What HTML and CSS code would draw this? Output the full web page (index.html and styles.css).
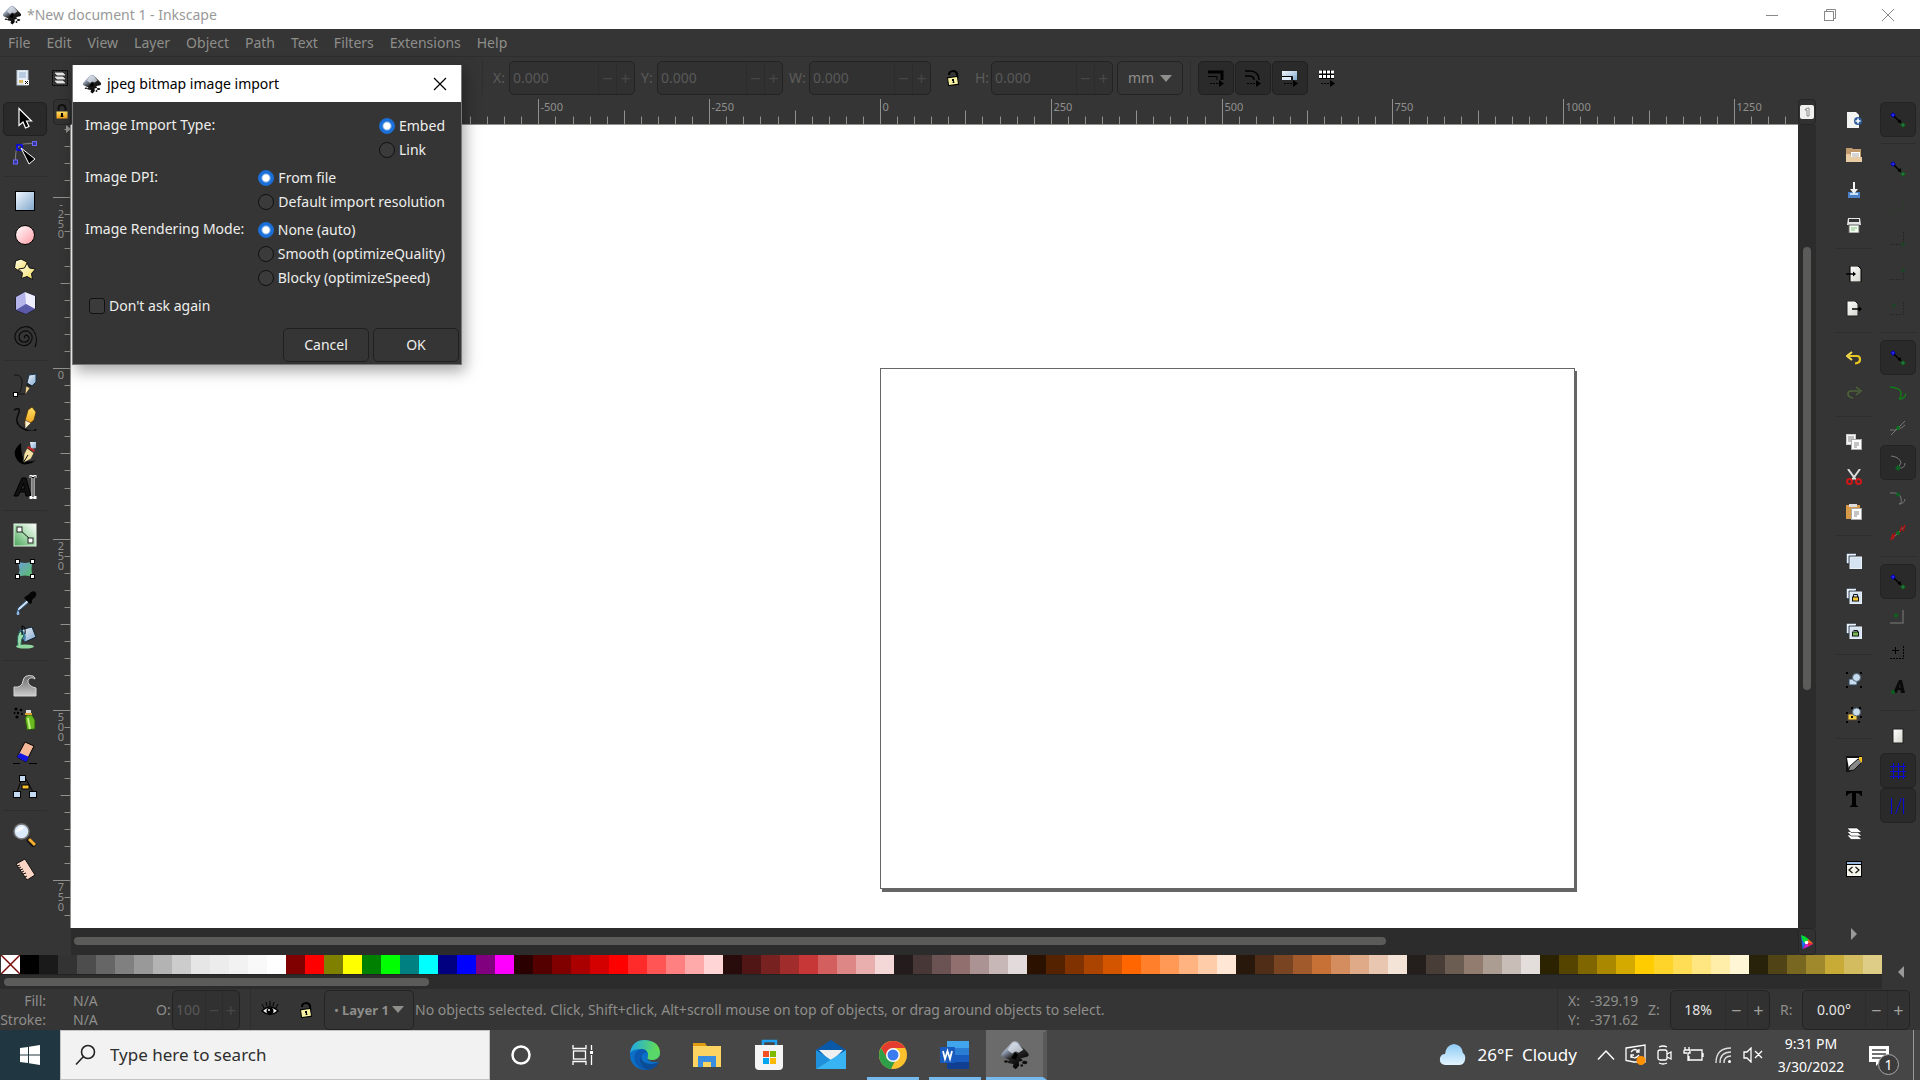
FILE: index.html
```
<!DOCTYPE html>
<html lang="en">
<head>
<meta charset="utf-8">
<title>*New document 1 - Inkscape</title>
<link rel="stylesheet" href="styles.css">
</head>
<body>
<svg class="sprite" aria-hidden="true">
  <defs>
    <linearGradient id="gLogo" x1="0" y1="0" x2="0.6" y2="1"><stop offset="0" stop-color="#fff"/><stop offset=".35" stop-color="#8d99ad"/><stop offset=".6" stop-color="#222"/><stop offset="1" stop-color="#000"/></linearGradient>
    <linearGradient id="gBlue" x1="0" y1="0" x2="1" y2="1"><stop offset="0" stop-color="#f4f9ff"/><stop offset="1" stop-color="#7fa6cc"/></linearGradient>
    <linearGradient id="gPink" x1="0" y1="0" x2="1" y2="1"><stop offset="0" stop-color="#fff"/><stop offset="1" stop-color="#ff9ca6"/></linearGradient>
    <linearGradient id="gYellow" x1="0" y1="0" x2="1" y2="1"><stop offset="0" stop-color="#fffef0"/><stop offset="1" stop-color="#f4dc5a"/></linearGradient>
    <linearGradient id="gGreen" x1="0" y1="1" x2="1" y2="0"><stop offset="0" stop-color="#48a35a"/><stop offset=".5" stop-color="#a8dcae"/><stop offset="1" stop-color="#fff"/></linearGradient>
    <linearGradient id="gMesh" x1="0" y1="0" x2="1" y2="1"><stop offset="0" stop-color="#6e9ce0"/><stop offset="1" stop-color="#58c060"/></linearGradient>
    <linearGradient id="gGrey" x1="0" y1="0" x2="0" y2="1"><stop offset="0" stop-color="#666"/><stop offset="1" stop-color="#ccc"/></linearGradient>
    <linearGradient id="gPaper" x1="0" y1="0" x2="1" y2="1"><stop offset="0" stop-color="#fff"/><stop offset="1" stop-color="#d4d4cc"/></linearGradient>
    <linearGradient id="gGold" x1="0" y1="0" x2="0" y2="1"><stop offset="0" stop-color="#ffe46a"/><stop offset="1" stop-color="#f09a10"/></linearGradient>
    <linearGradient id="gCloud" x1="0" y1="0" x2="0" y2="1"><stop offset="0" stop-color="#8ecbf6"/><stop offset="1" stop-color="#e4f5ff"/></linearGradient>
    <linearGradient id="gEdge" x1="0" y1="0" x2="1" y2="0"><stop offset="0" stop-color="#1fa8e8"/><stop offset="1" stop-color="#68e04a"/></linearGradient>
  </defs>
  <symbol id="logo" viewBox="0 0 20 20"><path d="M8 1.500Q10 0 12 1.500L18.500 8.500Q20 10.500 18 11.200L13.500 12.300Q16 13 14.500 14L12.500 14.500 12.800 17 10.500 19.500 8.500 18 9 16 6 15.500Q4 14.500 6.500 13.500L2 11.500Q0 10.500 1.500 8.500Z" fill="url(#gLogo)"/><path d="M8 2.500Q10 .8 12 2.500L15.500 6.500 12.500 8.500 10.500 7.500 8 9 5 6.500Z" fill="#dfe5ef" opacity=".75"/><path d="M10 8l2 2-1.500 3-3-1z" fill="#000"/><ellipse cx="16.500" cy="15" rx="1.800" ry="1.100" fill="#111"/><ellipse cx="4" cy="14.300" rx="1.300" ry=".8" fill="#111"/><circle cx="14.500" cy="17" r=".9" fill="#111"/></symbol>
  <symbol id="lock-open" viewBox="0 0 16 18"><path d="M4 6C4 1 11 1 12 5L12.500 9" fill="none" stroke="#000" stroke-width="2"/><rect x="3" y="8" width="10" height="8" fill="#f6f0a0" stroke="#000" transform="rotate(-8 8 12)"/><path d="M7 10h2v2l.5 2h-2l.5-2h-1z" fill="#000"/></symbol>
  <symbol id="snap-main" viewBox="0 0 16 16"><path d="M4 4L10 10" stroke="#000" stroke-width="1.500"/><path d="M11.500 11.500L7.500 10 10.500 7z" fill="#000"/><path d="M3 .2L5.800 3 3 5.800 .2 3z" fill="#00b"/><path d="M3 1.500L4.500 3 3 4.500 1.500 3z" fill="#33e"/><path d="M13 10.200L15.800 13 13 15.800 10.200 13z" fill="#0d6614"/><path d="M13 11.700L14.300 13 13 14.300 11.700 13z" fill="#36745e"/></symbol>
  <symbol id="two-sheets" viewBox="0 0 16 16"><path d="M1 1h9v2H3v8H1z" fill="#dce8f6" stroke="#1a2a3a"/><path d="M1.500 10V1.500H10" fill="none" stroke="#e8f0fa" stroke-width="1.500"/><rect x="4" y="4" width="11.500" height="11.500" fill="#d4e2f2" stroke="#e8f0fa"/></symbol>
</svg>

<header class="titlebar">
  <svg class="app-logo"><use href="#logo"/></svg>
  <h1 class="window-title">*New document 1 - Inkscape</h1>
  <div class="window-controls">
    <button aria-label="Minimize"><svg width="14" height="14"><path d="M1 7.500h12" stroke="#888"/></svg></button>
    <button aria-label="Restore"><svg width="14" height="14" fill="none" stroke="#888"><rect x="1.500" y="3.500" width="9" height="9"/><path d="M3.500 3V1.500h9v9H11"/></svg></button>
    <button aria-label="Close"><svg width="14" height="14"><path d="M1 1l12 12M13 1L1 13" stroke="#888"/></svg></button>
  </div>
</header>

<nav class="menubar">
  <button>File</button><button>Edit</button><button>View</button><button>Layer</button><button>Object</button><button>Path</button><button>Text</button><button>Filters</button><button>Extensions</button><button>Help</button>
</nav>

<section class="toolbar" aria-label="Tool controls">
  <button class="icon-btn" aria-label="New"><svg width="16" height="16" viewBox="0 0 16 16"><rect x="2" y="0" width="11" height="15" fill="#e8eef6" stroke="#b8c4d4"/><path d="M4 3h7M4 5h7M4 7h7" stroke="#88a8d0"/><rect x="4" y="10" width="4" height="3" fill="#d8b860"/><rect x="9" y="10" width="5" height="5" fill="#fff"/><path d="M10 11l3 3m0-3l-3 3" stroke="#000"/></svg></button>
  <button class="icon-btn" aria-label="Layers"><svg width="16" height="16" viewBox="0 0 16 16"><rect x=".5" y=".5" width="15" height="15" fill="none" stroke="#000" stroke-dasharray="2 1"/><path d="M3 3h8l2 2H5zM3 7h8l2 2H5zM3 11h8l2 2H5z" fill="#fff" stroke="#ccc"/></svg></button>
  <div class="fields">
    <label for="fx">X:</label><div class="spin spin-a"><input id="fx" value="0.000" disabled><button disabled>−</button><button disabled>+</button></div>
    <label for="fy">Y:</label><div class="spin spin-a"><input id="fy" value="0.000" disabled><button disabled>−</button><button disabled>+</button></div>
    <label class="wide" for="fw">W:</label><div class="spin spin-b"><input id="fw" value="0.000" disabled><button disabled>−</button><button disabled>+</button></div>
    <button class="ratio" aria-label="Lock ratio"><svg width="16" height="18"><use href="#lock-open"/></svg></button>
    <label for="fh">H:</label><div class="spin spin-b"><input id="fh" value="0.000" disabled><button disabled>−</button><button disabled>+</button></div>
    <button class="combo unit" aria-label="Unit">mm<i class="caret"></i></button>
    <div class="toggles">
      <button class="on" aria-label="Scale stroke"><svg width="18" height="18" viewBox="0 0 18 18"><path d="M1 3h14v8" fill="none" stroke="#000" stroke-width="3"/><path d="M1 7.500h9V11" fill="none" stroke="#000"/><path d="M3 14.500h9" stroke="#000" stroke-dasharray="2 1"/><path d="M12 11l5 3.500-5 3.500z"/></svg></button>
      <button class="on" aria-label="Scale corners"><svg width="18" height="18" viewBox="0 0 18 18"><path d="M1 2h6q8 1 8 9M1 7h4q5 0 5 4" fill="none" stroke="#000" stroke-width="1.500"/><path d="M3 14.500h9" stroke="#000" stroke-dasharray="2 1"/><path d="M12 11l5 3.500-5 3.500z"/></svg></button>
      <button class="on" aria-label="Move gradients"><svg width="18" height="18" viewBox="0 0 18 18"><path d="M1 2h15v9h-4V7H1z" fill="url(#gBlue)"/><path d="M1 8h9v3H1z" fill="#dceaf8"/><path d="M1 7.500h10V11" fill="none" stroke="#000"/><path d="M3 14.500h9" stroke="#000" stroke-dasharray="2 1"/><path d="M12 11l5 3.500-5 3.500z"/></svg></button>
      <button aria-label="Move patterns"><svg width="18" height="18" viewBox="0 0 18 18"><rect x="1" y="1" width="15" height="9" fill="#000"/><path d="M1 3h15M1 7.500h15" stroke="#fff" stroke-width="3" stroke-dasharray="3 1"/><path d="M3 14.500h9" stroke="#000" stroke-dasharray="2 1"/><path d="M12 11l5 3.500-5 3.500z"/></svg></button>
    </div>
  </div>
</section>

<main class="workspace">
  <aside class="toolbox" aria-label="Tools">
    <button class="on" aria-label="Select"><svg viewBox="0 0 24 24"><path d="M6 1.500v17l4-3.500 2.500 6 3.500-1.500L13.500 14h5z" fill="#000" stroke="#fff" stroke-width="1.200"/></svg></button>
    <button aria-label="Edit nodes"><svg viewBox="0 0 24 24"><path d="M2.500 20Q2 8 6 5T21 2.500" fill="none" stroke="#777" stroke-width="1.300"/><rect x=".5" y="19" width="4" height="4" fill="#35359a" stroke="#6a6aff"/><rect x="19.500" y=".5" width="4" height="4" fill="#35359a" stroke="#6a6aff"/><rect x="4" y="4" width="5" height="5" fill="none" stroke="#00f" stroke-width="1.500"/><path d="M8 7l14 11-6 5z" fill="#000" stroke="#fff"/></svg></button>
    <hr>
    <button aria-label="Rectangle"><svg viewBox="0 0 24 24"><rect x="2.500" y="2.500" width="19" height="19" fill="url(#gBlue)" stroke="#000"/></svg></button>
    <button aria-label="Ellipse"><svg viewBox="0 0 24 24"><circle cx="12" cy="12" r="9.500" fill="url(#gPink)" stroke="#000"/></svg></button>
    <button aria-label="Star"><svg viewBox="0 0 24 24"><path d="M8 2l6 3 .5 7-7 3-6-4 1-7z" fill="url(#gYellow)" stroke="#111"/><path d="M14 6l2.500 5 6 1-4 4.500 1 6-5.500-3-5.500 2 1-5.500-4-4 6-1z" fill="url(#gYellow)" stroke="#111"/></svg></button>
    <button aria-label="3D box"><svg viewBox="0 0 24 24"><path d="M3 6l9-5 10 4v13l-9 5-10-4z" fill="#9d9ddc" stroke="#112"/><path d="M3 6l9-5 1 12-10 6z" fill="#b4b4ea"/><path d="M12 1l10 4v13l-9-5z" fill="#eeeeff"/><path d="M13 13l9 5-9 5-10-4z" fill="#5a5aa8"/></svg></button>
    <button aria-label="Spiral"><svg viewBox="0 0 24 24"><path d="M12 13c-2-1 1-4 3-2 3 3-1 7-5 6-5-1-5-8-1-10 5-3 11 1 10 7-1 5-6 8-11 6C2 18 0 11 4 6 8 1 16 0 20 5c4 5 4 12 2 17" fill="none" stroke="#0a0a0a" stroke-width="1.200"/></svg></button>
    <hr>
    <button aria-label="Pen"><svg viewBox="0 0 24 24"><path d="M1 2q9-1 8 9t-6 10h9" fill="none" stroke="#151515"/><rect x=".5" y="19.500" width="4" height="4" fill="#fff" stroke="#000"/><path d="M16 2l7-1v8l-4 4-5-3z" fill="url(#gBlue)" stroke="#18344c"/><path d="M14 10l5 3-2 1-4-2z" fill="#222"/><path d="M13 13l4 2-5 7z" fill="#f4d890" stroke="#222" stroke-width=".6"/></svg></button>
    <button aria-label="Pencil"><svg viewBox="0 0 24 24"><path d="M1 3q8-4 4 5t6 14 12 0" fill="none" stroke="#0a0a0a" stroke-width="1.500"/><path d="M15 3l4-3 4 5-2 8-7 6-3-2z" fill="url(#gGold)" stroke="#503000" stroke-width=".8"/><path d="M12 13l6 3-6 6z" fill="#fff0cc" stroke="#222" stroke-width=".6"/></svg></button>
    <button aria-label="Calligraphy"><svg viewBox="0 0 24 24"><path d="M8 2Q-1 9 3 17t12 6q5-1 8-4-7 3-11 0T8 2z" fill="#000"/><path d="M17 1h6v6l-5 1z" fill="url(#gBlue)"/><path d="M15 5l7 4-1 2-7-4z" fill="#c02828"/><path d="M14 7l7 5-3 6-8 4 1-9z" fill="#f4e0a0" stroke="#222" stroke-width=".7"/><path d="M10 22l5-8" stroke="#000"/></svg></button>
    <button aria-label="Text"><svg viewBox="0 0 24 24"><path d="M1 21L9 3h4l5 18h-5l-1-4H7l-2 4zM8 14h3.500L10.500 8z" fill="#111" stroke="#000"/><path d="M16.500 1.500h2l1.500 1 1.500-1h2M16.500 22.500h2l1.500-1 1.500 1h2M20 2v20" fill="none" stroke="#fff" stroke-width="3"/><path d="M17 2h2l1 1 1-1h2M20 3v19" fill="none" stroke="#000"/></svg></button>
    <hr>
    <button aria-label="Gradient"><svg viewBox="0 0 24 24"><rect x="1" y="1" width="22" height="22" fill="url(#gGreen)" stroke="#e4f4e4"/><path d="M6 6l12 11" stroke="#111"/><rect x="4" y="4" width="5" height="5" fill="#fff" stroke="#222"/><rect x="15" y="15" width="5" height="5" fill="#fff" stroke="#222"/></svg></button>
    <button aria-label="Mesh"><svg viewBox="0 0 24 24"><path d="M4 4q8 4 16 0-3 8 0 16-8-3-16 0 5-7 0-16z" fill="url(#gMesh)"/><g fill="#fff" stroke="#000"><rect x="2.500" y="2.500" width="4" height="4"/><rect x="17.500" y="2.500" width="4" height="4"/><rect x="2.500" y="17.500" width="4" height="4"/><rect x="17.500" y="17.500" width="4" height="4"/></g></svg></button>
    <button aria-label="Dropper"><svg viewBox="0 0 24 24"><path d="M15 8l2 2L7 19l-3 1 1-3z" fill="#cfe4f8" stroke="#2a4a70"/><path d="M13 5l2-1 3-3q4-2 5 1t-2 5l-2 2v3l-2 1-6-6z" fill="#050505"/><path d="M5 19q3 5 0 5t0-5z" fill="#8ab8e8"/></svg></button>
    <button aria-label="Bucket"><svg viewBox="0 0 24 24"><path d="M7 5l12-3 4 10-11 5z" fill="url(#gBlue)" stroke="#123"/><path d="M12 17L6 7l2-3q7 5 4 13z" fill="#4c86b0"/><path d="M8 6q-5 3-3 15h3q0-8 3-10z" fill="#9adcb0" stroke="#265"/><ellipse cx="12" cy="21.500" rx="9" ry="2" fill="#8ed8a0"/><path d="M9 10V1q4 0 3 8" fill="none" stroke="#000"/></svg></button>
    <hr>
    <button aria-label="Tweak"><svg viewBox="0 0 24 24"><path d="M1 23v-9q8 1 9-6 1-7 10-5 2 1 2 3-4-3-7 1-1 6 8 8v8z" fill="url(#gGrey)" stroke="#d4d4d4"/></svg></button>
    <button aria-label="Spray"><svg viewBox="0 0 24 24"><path d="M12 11l2-3h5l3 5v9l-8 1z" fill="#68b820" stroke="#2a5010"/><path d="M15 11l2 11" stroke="#c0f080" stroke-width="2"/><rect x="13" y="3" width="5" height="3" fill="#ddd"/><rect x="12" y="6" width="7" height="2" fill="#e0a030"/><g fill="#000"><circle cx="3" cy="2" r="1.500"/><circle cx="8" cy="3" r="1.300"/><circle cx="5" cy="6" r="1.200"/><circle cx="9" cy="7" r="1"/><circle cx="4" cy="10" r="1.600"/><circle cx="1.500" cy="6" r="1"/></g></svg></button>
    <button aria-label="Eraser"><svg viewBox="0 0 24 24"><path d="M12 1l9 4-8 16-9-5z" fill="#f4b898" stroke="#000"/><path d="M7 12l9 4-3 5-9-5z" fill="#1414e0"/><path d="M0 22.500h7M16 22.500h8" stroke="#000"/></svg></button>
    <button aria-label="Connector"><svg viewBox="0 0 24 24"><path d="M4 17L8 6M13 4l7 13" stroke="#000"/><g fill="#c4daf0" stroke="#000"><rect x="6.500" y=".5" width="6" height="6"/><rect x=".5" y="16.500" width="7" height="6"/><rect x="16.500" y="16.500" width="7" height="6"/></g><rect x="9" y="10" width="7" height="4" fill="#f8c030" stroke="#000"/></svg></button>
    <hr>
    <button aria-label="Zoom"><svg viewBox="0 0 24 24"><path d="M15 16l7 7" stroke="#111" stroke-width="5"/><path d="M16 16l6 6" stroke="#f8b030" stroke-width="3"/><circle cx="8.500" cy="8.500" r="7.500" fill="#dcecfc" stroke="#777" stroke-width="1.500"/><path d="M3 9q2-6 8-5-2 4-8 5z" fill="#fff"/></svg></button>
    <button aria-label="Measure"><svg viewBox="0 0 24 24"><path d="M3 7l9-5 10 16-8 5z" fill="#fcd4c4" stroke="#111"/><path d="M4 9l3-1M6 11l2-1M7 13l3-1M9 15l2-1M10 17l3-1M12 20l2-1" stroke="#111"/></svg></button>
  </aside>

  <section class="canvas-grid">
    <button class="corner" aria-label="Lock guides"><svg width="14" height="16" viewBox="0 0 14 16"><path d="M3.500 7V4.500Q3.500 1 7 1t3.500 3.500V7" fill="none" stroke="#111" stroke-width="2"/><rect x="1" y="7" width="12" height="8" fill="url(#gGold)" stroke="#333"/><path d="M6 9h2v2l.5 2h-3l.5-2z"/></svg></button>
    <svg class="ruler-h" id="rulerH"></svg>
    <button class="corner" aria-label="Page view"><svg width="16" height="16" viewBox="0 0 16 16"><rect x="1" y="1" width="14" height="14" rx="2" fill="#f0f0ee"/><path d="M6 5.500l3-1.500h1v8H8V6H6z" fill="#fff" stroke="#888"/></svg></button>
    <svg class="ruler-v" id="rulerV"></svg>
    <div class="canvas"><div class="page"></div></div>
    <div class="scroll-v"><div class="thumb-v"></div></div>
    <div></div>
    <div class="scroll-h"><div class="thumb-h"></div></div>
    <button class="corner" aria-label="Color management"><svg width="16" height="18" viewBox="0 0 16 18"><path d="M2 2L3.500 16 8 9z" fill="#1c6cf0"/><path d="M2 2Q3 7 5 10L9 9 9.500 6Q6 3 2 2z" fill="#0d3"/><path d="M9 6q4 3 5 5l-6 0z" fill="#f07020"/><path d="M14 11q-5 3-10 5l3-6z" fill="#d020d0"/><path d="M14 11l-5 2-1-4z" fill="#f02040"/><circle cx="7.500" cy="9.500" r="1.800" fill="#fff"/></svg></button>
  </section>

  <aside class="dock commands" aria-label="Commands">
    <button aria-label="New document"><svg viewBox="0 0 16 16"><path d="M1 0h9l3 3v13H1z" fill="#f4f4f2"/><circle cx="12" cy="9" r="4" fill="#2c5c9c"/><path d="M12 6.500v5M9.500 9h5" stroke="#fff" stroke-width="1.500"/></svg></button>
    <button aria-label="Open"><svg viewBox="0 0 16 16"><path d="M0 1h6l1 1h8v13H0z" fill="#c09a6c"/><path d="M5 5h9v6H5z" fill="#fff"/><path d="M6 7h7M6 9h7" stroke="#aaa"/><path d="M0 7h4l1 3h11v5H0z" fill="#e8cca4"/></svg></button>
    <button aria-label="Save"><svg viewBox="0 0 16 16"><path d="M2 10h12v6H2z" fill="#4a80c8"/><path d="M4 11h8v2H4z" fill="#c8dcf4"/><path d="M7 0h2v7h3l-4 5-4-5h3z" fill="#f4f4f4"/></svg></button>
    <button aria-label="Print"><svg viewBox="0 0 16 16"><path d="M2 1h12l1 7H1z" fill="#e4e4e4"/><rect x="3" y="2" width="10" height="3" fill="#333"/><rect x="3" y="8" width="10" height="8" fill="#f4fff0" stroke="#666"/><path d="M5 11h6M5 13h4" stroke="#8b8"/></svg></button>
    <hr>
    <button aria-label="Import"><svg viewBox="0 0 16 16"><path d="M4 0h8l3 3v13H4z" fill="url(#gPaper)" stroke="#000"/><path d="M0 8h8" stroke="#000" stroke-width="1.500"/><path d="M7 5.500l3 2.500-3 2.500z"/></svg></button>
    <button aria-label="Export"><svg viewBox="0 0 16 16"><path d="M1 0h8l3 3v12H1z" fill="url(#gPaper)" stroke="#222"/><path d="M6 8h8" stroke="#000" stroke-width="1.500"/><path d="M13 5.500l3 2.500-3 2.500z"/></svg></button>
    <hr>
    <button aria-label="Undo"><svg viewBox="0 0 16 16"><path d="M3 6h8q3 0 3 3.500t-5 4" fill="none" stroke="#e8c820" stroke-width="2.200"/><path d="M6 2L1 6l5 4" fill="none" stroke="#f4dc50" stroke-width="2"/></svg></button>
    <button aria-label="Redo"><svg viewBox="0 0 16 16"><path d="M13 6H5Q2 6 2 9t5 4" fill="none" stroke="#4c6438" stroke-width="1.600"/><path d="M10 2l5 4-5 4" fill="none" stroke="#4c6438" stroke-width="1.600"/></svg></button>
    <hr>
    <button aria-label="Copy"><svg viewBox="0 0 16 16"><rect x=".5" y=".5" width="9" height="10" fill="#f4f4f4" stroke="#ccc"/><path d="M2 3h6M2 5h6M2 7h4" stroke="#888"/><rect x="5.500" y="5.500" width="10" height="10" fill="#fff" stroke="#aaa"/><path d="M8 9h5M8 11h5M8 13h3" stroke="#888"/></svg></button>
    <button aria-label="Cut"><svg viewBox="0 0 16 16"><path d="M2 0l8 11M14 0L6 11" stroke="#ddd" stroke-width="2"/><circle cx="3.500" cy="12.500" r="2.500" fill="none" stroke="#d01818" stroke-width="2"/><circle cx="12.500" cy="12.500" r="2.500" fill="none" stroke="#d01818" stroke-width="2"/></svg></button>
    <button aria-label="Paste"><svg viewBox="0 0 16 16"><rect x="0" y="1" width="14" height="14" fill="#d49a48"/><rect x="3" y="0" width="8" height="3" fill="#ddd"/><rect x="5.500" y="4.500" width="10" height="11" fill="#fff" stroke="#aaa"/><path d="M8 8h5M8 10h5M8 12h3" stroke="#888"/></svg></button>
    <hr>
    <button aria-label="Duplicate"><svg viewBox="0 0 16 16"><use href="#two-sheets"/></svg></button>
    <button aria-label="Clone"><svg viewBox="0 0 16 16"><use href="#two-sheets"/><path d="M7.500 9V6.500h4V9" fill="none" stroke="#111"/><rect x="6.500" y="9" width="6" height="4" fill="#f8c830" stroke="#111"/></svg></button>
    <button aria-label="Unlink clone"><svg viewBox="0 0 16 16"><use href="#two-sheets"/><path d="M7.500 7.500h4v2" fill="none" stroke="#111"/><rect x="6.500" y="9" width="6" height="4" fill="#78b850" stroke="#111"/></svg></button>
    <hr>
    <button aria-label="Group"><svg viewBox="0 0 16 16"><rect x="3" y="7" width="8" height="6" fill="#c8dcf0" stroke="#345"/><circle cx="10.500" cy="5.500" r="4" fill="#c8dcf0" stroke="#567"/><path d="M0 0h2v2H0zM14 0h2v2h-2zM0 14h2v2H0zM14 14h2v2h-2z"/></svg></button>
    <button aria-label="Ungroup"><svg viewBox="0 0 16 16"><rect x="2" y="7" width="9" height="6" fill="#f8d040" stroke="#543"/><circle cx="10.500" cy="5" r="4" fill="#c8dcf0" stroke="#567"/><path d="M0 5h2v2H0zM13 0h2v2h-2zM0 14h2v2H0zM12 14h2v2h-2zM5 0h2v2H5zM14 9h2v2h-2zM5 9h2v2H5z"/></svg></button>
    <hr>
    <button aria-label="Fill and stroke"><svg viewBox="0 0 16 16"><path d="M0 0h16v2L4 16H0z" fill="#111"/><path d="M1 2h12L3 13z" fill="#fff"/><path d="M12 3l4 3-8 8-6 1 2-5z" fill="#888" stroke="#111"/><path d="M13 1h3v6l-3-3z" fill="#f8c020"/></svg></button>
    <button aria-label="Text and font"><svg viewBox="0 0 16 16"><path d="M0 0h16v5h-1q-1-3-5-3v11q0 2 2 2v1H4v-1q2 0 2-2V2Q2 2 1 5H0z"/></svg></button>
    <button aria-label="Layers"><svg viewBox="0 0 16 16"><g fill="#fff" stroke="#111" stroke-width=".6"><path d="M1 9h10l5 4.500H5z"/><path d="M1 5.500h10l5 4.500H5z"/><path d="M1 2h10l5 4.500H5z"/></g></svg></button>
    <button aria-label="XML editor"><svg viewBox="0 0 16 16"><rect x=".5" y=".5" width="15" height="15" fill="#f4f4ea" stroke="#000"/><path d="M1 1h14v2H1z" fill="#98b8e0"/><path d="M1 3.500h14" stroke="#000"/><path d="M6.500 6L3 9l3.500 3M9.500 6L13 9l-3.500 3" fill="none" stroke="#111" stroke-width="1.200"/></svg></button>
    <button class="more" aria-label="More"><svg viewBox="0 0 16 16"><path d="M5 2l6 6-6 6z" fill="#999"/></svg></button>
  </aside>

  <aside class="dock snaps" aria-label="Snapping">
    <button class="on" aria-label="Snapping"><svg viewBox="0 0 16 16"><use href="#snap-main"/></svg></button>
    <hr>
    <button aria-label="Snap bounding boxes"><svg viewBox="0 0 16 16"><use href="#snap-main"/></svg></button>
    <button aria-label="Snap edges"><svg viewBox="0 0 16 16"><path d="M0 14.500h13.500V2" fill="none" stroke="#2b3d2a" stroke-dasharray="2 1"/></svg></button>
    <button aria-label="Snap corners"><svg viewBox="0 0 16 16"><path d="M0 13.500h13.500V1" fill="none" stroke="#242424" stroke-dasharray="2 1"/><path d="M13 11l2.500 2.500L13 16l-2.500-2.500z" fill="#1f4326"/></svg></button>
    <button aria-label="Snap edge midpoints"><svg viewBox="0 0 16 16"><path d="M0 13.500h13.500V5" fill="none" stroke="#282828" stroke-dasharray="2 1"/><path d="M13 2l2.500 2.500L13 7l-2.500-2.500z" fill="#1f4326"/></svg></button>
    <button aria-label="Snap centers"><svg viewBox="0 0 16 16"><path d="M0 13.500h13.500V1" fill="none" stroke="#282828" stroke-dasharray="2 1"/><path d="M4 2l2.500 2.500L4 7 1.500 4.500z" fill="#1f4326"/></svg></button>
    <hr>
    <button class="on" aria-label="Snap nodes"><svg viewBox="0 0 16 16"><use href="#snap-main"/></svg></button>
    <button aria-label="Snap paths"><svg viewBox="0 0 16 16"><path d="M0 2q11 1 11 6t-2 6q6 0 7-6" fill="none" stroke="#147a18" stroke-width="1.500"/></svg></button>
    <button aria-label="Snap intersections"><svg viewBox="0 0 16 16"><path d="M1 15L15 1M0 10q9 1 15-5" fill="none" stroke="#777"/><path d="M8 5.500l2.500 2.500L8 10.500 5.500 8z" fill="#0c7020"/></svg></button>
    <button class="on" aria-label="Snap cusp nodes"><svg viewBox="0 0 16 16"><path d="M1 1q9 1 10 7l-3 5q7 1 7-5" fill="none" stroke="#777"/><path d="M8 10l3 3-3 3-3-3z" fill="#0c6020"/></svg></button>
    <button aria-label="Snap smooth nodes"><svg viewBox="0 0 16 16"><path d="M0 3q10-1 11 5t-2 6q5 0 6-5" fill="none" stroke="#777"/><path d="M8 2l2.500 2.500L8 7 5.500 4.500z" fill="#0c6020"/></svg></button>
    <button aria-label="Snap line midpoints"><svg viewBox="0 0 16 16"><path d="M1 15L15 1" stroke="#777"/><path d="M1 15l2-6M3 14l2-6M10 7l2-6M13 6l2-6" stroke="#b01414" stroke-width="1.500"/><path d="M8 5.500l2.500 2.500L8 10.500 5.500 8z" fill="#0c7020"/></svg></button>
    <hr>
    <button class="on" aria-label="Snap others"><svg viewBox="0 0 16 16"><use href="#snap-main"/></svg></button>
    <button aria-label="Snap object midpoints"><svg viewBox="0 0 16 16"><path d="M0 14h13V1" fill="none" stroke="#666" stroke-width="1.500"/><path d="M6 4l2.500 2.500L6 9 3.500 6.500z" fill="#0c6020"/></svg></button>
    <button aria-label="Snap rotation centers"><svg viewBox="0 0 16 16"><path d="M0 14.500h13.500V2" fill="none" stroke="#000" stroke-dasharray="2 1"/><path d="M2 6.500h7M5.500 3v7" stroke="#000"/></svg></button>
    <button aria-label="Snap text baseline"><svg viewBox="0 0 16 16"><path d="M3 14L9 1h3l3 13h-4l-.5-3H8l-1.500 3zM9 8.500h1.500L10 5z" fill="#0a0a0a"/><path d="M3 10.500L5.500 13 3 15.500.5 13z" fill="#0c6020"/></svg></button>
    <hr>
    <button aria-label="Snap page border"><svg viewBox="0 0 16 16"><rect x="3" y="1" width="10" height="14" fill="url(#gPaper)" stroke="#222"/></svg></button>
    <button class="on" aria-label="Snap grids"><svg viewBox="0 0 16 16"><path d="M0 3.500h16M0 8.500h16M0 13.500h16M3.500 0v16M8.500 0v16M13.500 0v16" stroke="#0a0ad8"/></svg></button>
    <button class="on" aria-label="Snap guides"><svg viewBox="0 0 16 16"><path d="M1.500 0v16M13.500 0v16M5.500 16L11.500 0" fill="none" stroke="#0a0ad8"/></svg></button>
  </aside>
</main>

<section class="palette-bar">
  <div class="palette">
    <div class="swatches" id="swatches"></div>
    <div class="palette-scroll"><div class="thumb-p"></div></div>
  </div>
  <button class="palette-menu" aria-label="Palette menu"><svg width="16" height="16"><path d="M11 2L5 8l6 6z" fill="#999"/></svg></button>
</section>

<footer class="statusbar">
  <dl class="style-info"><dt>Fill:</dt><dd>N/A</dd><dt>Stroke:</dt><dd>N/A</dd></dl>
  <label for="op">O:</label>
  <div class="spin spin-o"><input id="op" value="100" disabled><button disabled>−</button><button disabled>+</button></div>
  <div class="layer-tools">
    <button aria-label="Layer visibility"><svg width="18" height="18" viewBox="0 0 18 18"><path d="M1 10q8-8 16 0-8 7-16 0z" fill="#eee" stroke="#000" stroke-width="1.500"/><circle cx="9" cy="10" r="3.500"/><circle cx="8" cy="9" r="1" fill="#fff"/><path d="M3 7L1 3M6 5L5 1M9 5V0M12 5l1-4M15 7l2-4" stroke="#000"/></svg></button>
    <button aria-label="Layer lock"><svg width="16" height="18"><use href="#lock-open"/></svg></button>
  </div>
  <button class="combo layer">•<b>Layer 1</b><i class="caret"></i></button>
  <p class="hint">No objects selected. Click, Shift+click, Alt+scroll mouse on top of objects, or drag around objects to select.</p>
  <dl class="coords"><dt>X:</dt><dd>-329.19</dd><dt>Y:</dt><dd>-371.62</dd></dl>
  <label for="zm">Z:</label>
  <div class="spin live spin-z"><input id="zm" value="18%"><button>−</button><button>+</button></div>
  <label for="rt">R:</label>
  <div class="spin live spin-r"><input id="rt" value="0.00°"><button>−</button><button>+</button></div>
</footer>

<footer class="taskbar">
  <button class="start" aria-label="Start"><svg width="20" height="20" viewBox="0 0 20 20"><path d="M0 3l8-1v7.500H0zM9 1.800L20 0v9.500H9zM0 10.500h8V18l-8-1zM9 10.500h11V20L9 18.200z" fill="#fff"/></svg></button>
  <label class="search"><svg width="22" height="22" viewBox="0 0 22 22" fill="none" stroke="#222" stroke-width="1.600"><circle cx="13" cy="8" r="6.500"/><path d="M8.500 12.500L1 20.500"/></svg><input placeholder="Type here to search" aria-label="Search"></label>
  <div class="apps">
    <button aria-label="Cortana"><svg width="22" height="22"><circle cx="11" cy="11" r="8.500" fill="none" stroke="#fff" stroke-width="2.500"/></svg></button>
    <button aria-label="Task view"><svg width="22" height="20" fill="none" stroke="#fff" stroke-width="1.300"><path d="M1 0v3.500h13V0M1 20v-3.500h13V20M19.500 0v5M19.500 10v10"/><rect x="1.500" y="6" width="12" height="8"/><path d="M18 7.500h3" stroke-width="3"/></svg></button>
    <button aria-label="Edge"><svg width="32" height="32" viewBox="0 0 32 32"><circle cx="16" cy="16" r="15" fill="#0c70c8"/><path d="M1 14Q3 1 16 1q14 1 15 12 0 8-8 8-6 0-4-4 1-7-7-7Q4 10 1 14z" fill="url(#gEdge)"/><path d="M12 10q-9 3-6 13 4 8 12 8-9-4-7-12 1-4 7-6-2-3-6-3z" fill="#0a58b0"/><path d="M18 31q8 0 12-8-9 4-15 0-4-3-2-8-6 10 5 16z" fill="#0b4c96"/><path d="M19 17q-2 6 7 6 4 0 5-2v4h3V12l-3 1q0 8-8 8-5 0-4-4z" fill="#464646"/><path d="M30.800 12q1 8-7 9-7 0-4.500-4 0-4-2-6z" fill="#58d868"/></svg></button>
    <button aria-label="File Explorer"><svg width="28" height="26" viewBox="0 0 28 26"><path d="M0 1h12l2 3H0z" fill="#e09c10"/><path d="M0 4h28v21H0z" fill="#fcd462"/><path d="M5 25V14h18v11h-5v-5h-8v5z" fill="#3a8ee0"/></svg></button>
    <button aria-label="Microsoft Store"><svg width="30" height="32" viewBox="0 0 30 32"><path d="M9 8V2h13v6" fill="none" stroke="#20a0f0" stroke-width="2.500"/><path d="M1 6h28v21q0 4-4 4H5q-4 0-4-4z" fill="#f4f4f4"/><path d="M9 12h6v6H9z" fill="#f25022"/><path d="M16 12h6v6h-6z" fill="#7fba00"/><path d="M9 19h6v6H9z" fill="#00a4ef"/><path d="M16 19h6v6h-6z" fill="#ffb900"/></svg></button>
    <button aria-label="Mail"><svg width="30" height="30" viewBox="0 0 30 30"><path d="M0 10L15 0l15 10v8H0z" fill="#0a58a8"/><path d="M3 10h24L15 22z" fill="#f0f0f0"/><path d="M0 10l15 10L0 29z" fill="#1e90dc"/><path d="M30 10L0 29h30z" fill="#38b4f4"/></svg></button>
    <button class="running" aria-label="Chrome"><svg width="30" height="30" viewBox="0 0 30 30"><circle cx="15" cy="15" r="14" fill="#fbc02d"/><path d="M3 8a14 14 0 0 1 24.200 0H15l-6 10z" fill="#e53c30"/><path d="M3 8l6.500 10.500L17 21l-4 8A14 14 0 0 1 3 8z" fill="#2f9e48"/><circle cx="15" cy="15" r="7" fill="#fff"/><circle cx="15" cy="15" r="5.500" fill="#3a7cf0"/></svg></button>
    <button class="running" aria-label="Word"><svg width="30" height="28" viewBox="0 0 30 28"><path d="M7 0h22v7H7z" fill="#41a5ee"/><path d="M7 7h22v7H7z" fill="#2b7cd3"/><path d="M7 14h22v7H7z" fill="#185abd"/><path d="M7 21h22v7H7z" fill="#103f91"/><rect y="6" width="15" height="16" rx="1" fill="#185abd"/><path d="M3 10l2 8 2.500-8 2.500 8 2-8" fill="none" stroke="#fff" stroke-width="1.800"/></svg></button>
    <button class="running active" aria-label="Inkscape"><svg width="30" height="30"><use href="#logo"/></svg></button>
  </div>
  <div class="tray">
    <button class="weather"><svg width="27" height="24" viewBox="0 0 27 24"><path d="M6 22q-6-1-5-7 1-4 5-4Q7 2 15 1q8 1 9 9 3 2 2 7t-6 5z" fill="url(#gCloud)"/></svg>26°F&nbsp; Cloudy</button>
    <div class="tray-icons">
      <svg width="18" height="12" fill="none" stroke="#fff" stroke-width="1.500"><path d="M1 10.500L9 2l8 8.500"/></svg>
      <svg width="22" height="22" viewBox="0 0 22 22" fill="none" stroke="#fff" stroke-width="1.300"><path d="M1 4l19-3v17H9L1 16.500z"/><path d="M6 8q4-5 8 0M14 5v3h-3M14 11q-4 5-8 1M6 14v-3h3"/><circle cx="16" cy="16.500" r="4.500" fill="#ff9100" stroke="none"/></svg>
      <svg width="16" height="20" fill="none" stroke="#fff" stroke-width="1.300"><rect x="1" y="5" width="9" height="10" rx="2"/><path d="M10 9l4-2v7l-4-2M2 2q4-2 8 0M2 18q4 2 8 0"/></svg>
      <svg width="22" height="16" fill="none" stroke="#fff" stroke-width="1.300"><path d="M8 3h11v10H6V9M20 6v4M2 0v3M6 0v3M1 3h6v3H5v8M1 3v3h3"/></svg>
      <svg width="18" height="18" fill="none" stroke="#ddd" stroke-width="1.400"><path d="M1 17Q1 2 16 2M5 17Q5 6 16 6M9 17q0-7 7-7"/><circle cx="14.500" cy="15.500" r="1.500" fill="#fff" stroke="none"/></svg>
      <svg width="20" height="16" fill="none" stroke="#fff" stroke-width="1.300"><path d="M1 5h3l4-4v14l-4-4H1zM12 4l7 7M19 4l-7 7"/></svg>
    </div>
    <div class="clock"><span>9:31 PM</span><span>3/30/2022</span></div>
    <button class="notify" aria-label="Notifications"><svg width="22" height="22" viewBox="0 0 22 22"><path d="M1 2h20v16h-9l-4 4v-4H1z" fill="#fff"/><path d="M4 6h14M4 10h14M4 14h9" stroke="#444" stroke-width="1.300"/></svg><span class="badge">1</span></button>
    <div class="peek"></div>
  </div>
</footer>

<form class="dialog" role="dialog" aria-labelledby="dlgTitle">
  <header class="dialog-head"><svg class="app-logo"><use href="#logo"/></svg><h2 id="dlgTitle">jpeg bitmap image import</h2><button type="button" aria-label="Close dialog"><svg width="14" height="14"><path d="M1 1l12 12M13 1L1 13" stroke="#000" stroke-width="1.200"/></svg></button></header>
  <div class="dialog-body">
    <div class="row" role="radiogroup" aria-labelledby="l1"><span id="l1">Image Import Type:</span>
      <div class="options"><label><input type="radio" name="type" checked>Embed</label><label><input type="radio" name="type">Link</label></div></div>
    <div class="row" role="radiogroup" aria-labelledby="l2"><span id="l2">Image DPI:</span>
      <div class="options"><label><input type="radio" name="dpi" checked>From file</label><label><input type="radio" name="dpi">Default import resolution</label></div></div>
    <div class="row" role="radiogroup" aria-labelledby="l3"><span id="l3">Image Rendering Mode:</span>
      <div class="options"><label><input type="radio" name="mode" checked>None (auto)</label><label><input type="radio" name="mode">Smooth (optimizeQuality)</label><label><input type="radio" name="mode">Blocky (optimizeSpeed)</label></div></div>
    <label class="again"><input type="checkbox">Don't ask again</label>
  </div>
  <div class="dialog-actions"><button type="button">Cancel</button><button type="button">OK</button></div>
</form>
<script src="app.js"></script>
</body>
</html>
```
FILE: styles.css
```
* { box-sizing: border-box; }
body {
  margin: 0; height: 100vh; display: flex; flex-direction: column; overflow: hidden;
  background: #353535; color: #8e8e8b;
  font: 14px/20px "Noto Sans", "Open Sans", sans-serif;
}
button, input { font: inherit; color: inherit; margin: 0; padding: 0; border: 0; background: none; }
button { display: flex; align-items: center; justify-content: center; }
svg { display: block; flex: none; }
h1, h2, p, dl, dd { margin: 0; font-size: inherit; font-weight: normal; }
.sprite { position: absolute; width: 0; height: 0; }
.app-logo { width: 20px; height: 20px; }

.titlebar { flex: none; height: 29px; background: #fff; color: #999; display: flex; align-items: center; gap: 5px; padding: 0 3px 0 2px; }
.window-title { flex: 1; }
.window-controls { display: flex; }
.window-controls button { width: 58px; height: 29px; }

.menubar { flex: none; height: 28px; display: flex; gap: 16px; padding-left: 8px; border-bottom: 1px solid #2e2e2e; }
.menubar button { padding-top: 1px; }

.toolbar { flex: none; height: 42px; display: flex; align-items: center; padding-left: 4px; }
.icon-btn { width: 37px; height: 34px; }
.fields { display: flex; align-items: center; height: 34px; margin-left: 404px; padding-left: 10px; border-left: 1px solid #2e2e2e; color: #5c5c5b; }
.fields label { width: 16px; }
.fields .wide { width: 20px; }
.spin { display: flex; border: 1px solid #232323; border-radius: 5px; background: #313131; height: 34px; overflow: hidden; color: #595959; }
.spin input { flex: 1; min-width: 0; padding-left: 3px; }
.spin button { width: 18px; border-left: 1px solid #2c2c2c; font-size: 18px; color: #474747; }
.spin-a { width: 126px; margin-right: 6px; }
.spin-b { width: 122px; }
.ratio { width: 44px; }
.combo { border: 1px solid #232323; border-radius: 5px; height: 34px; color: #8e8e8b; gap: 6px; }
.caret { border: 6px solid transparent; border-top: 7px solid #8e8e8b; border-bottom: 0; }
.unit { width: 66px; margin-left: 4px; }
.toggles { display: flex; gap: 1px; margin-left: 7px; padding-left: 7px; border-left: 1px solid #2e2e2e; }
.toggles button { width: 36px; height: 34px; border-radius: 5px; }
.on { background: #2a2a2a; border: 1px solid #202020; }

.workspace { flex: 1; min-height: 0; display: flex; }
.toolbox { width: 53px; padding: 3px 6px 0 3px; }
.toolbox button { width: 44px; height: 34px; border-radius: 5px; }
.toolbox svg { width: 24px; height: 24px; }
.workspace hr { height: 1px; margin: 6px 0 7px; border: 0; background: #2d2d2d; }

.canvas-grid { flex: 1; min-width: 0; display: grid; grid-template: 26px 1fr 27px / 18px 1fr 18px; }
.corner { border: 1px solid #252525; border-radius: 4px; background: #313131; overflow: hidden; }
.ruler-h, .ruler-v { width: 100%; height: 100%; overflow: hidden; }
.ruler-h line, .ruler-v line { stroke: #90908d; }
.ruler-h text, .ruler-v text { fill: #90908d; font-size: 11px; }
.ruler-v text { text-anchor: middle; }
.canvas { position: relative; background: #fff; overflow: hidden; }
.page { position: absolute; left: 809px; top: 243px; width: 695px; height: 521px; border: 1px solid #666; box-shadow: 2px 3px 0 #666; }
.scroll-v, .scroll-h, .palette-scroll { background: #2c2c2c; }
.scroll-v { padding: 122px 5px 0; }
.thumb-v { height: 65%; max-height: 443px; border-radius: 4px; background: #5b5b59; }
.scroll-h { padding: 9px 412px 0 3px; }
.thumb-h { height: 8px; border-radius: 4px; background: #5b5b59; }

.dock { padding: 3px 4px 0; width: 44px; }
.commands { width: 60px; padding-left: 20px; }
.dock button { width: 36px; height: 35px; }
.dock .on { border-radius: 5px; border-color: #232323; }
.dock svg { width: 16px; height: 16px; }
.dock .more { margin-top: 30px; }

.palette-bar { flex: none; display: flex; height: 34px; }
.palette { flex: 1; min-width: 0; }
.swatches { display: flex; height: 20px; padding-left: 1px; border-bottom: 1px solid #222; overflow: hidden; }
.swatches button { flex: 1; height: 19px; }
.palette-scroll { height: 14px; padding: 3px 4px 0; }
.thumb-p { width: 425px; height: 8px; border-radius: 4px; background: #5b5b59; }
.palette-menu { width: 38px; }

.statusbar { flex: none; height: 41px; display: flex; align-items: center; white-space: nowrap; }
.statusbar dl { display: grid; line-height: 19px; }
.style-info { width: 156px; grid-template-columns: 46px auto; column-gap: 27px; }
.style-info dt { text-align: right; }
.statusbar .spin, .layer { height: 40px; }
.statusbar > label { width: 16px; }
.spin-o { width: 68px; }
.spin-o input { width: 32px; flex: none; }
.layer-tools { display: flex; align-self: stretch; margin-left: 10px; border-left: 1px solid #2e2e2e; padding-left: 1px; }
.layer-tools button { width: 36px; }
.layer { width: 90px; gap: 3px; font-size: 13px; }
.hint { flex: 1; min-width: 0; padding-left: 1px; }
.coords { grid-template-columns: 22px 58px; align-self: stretch; align-content: center; padding-left: 10px; border-left: 1px solid #2e2e2e; }
.statusbar .live { color: #e4e4e2; margin: 0 10px 0 6px; }
.live input { text-align: center; padding: 0; }
.live button { width: 22px; color: #a0a09d; }
.spin-z { width: 100px; }
.spin-r { width: 108px; }

.taskbar { flex: none; height: 50px; display: flex; background: #464646; color: #fff; }
.start { width: 60px; background: #203741; }
.search { width: 430px; background: #f2f2f2; border: 1px solid #c4c4c4; display: flex; align-items: center; gap: 13px; padding-left: 14px; color: #222; }
.search input { flex: 1; font-size: 17px; }
.search input::placeholder { color: #2e2e2e; opacity: 1; }
.apps { display: flex; flex: 1; }
.apps button { width: 62px; border-bottom: 3px solid transparent; border-top: 3px solid transparent; background-clip: padding-box; }
.apps .running { border-bottom-color: #76b9ed; width: 52px; margin: 0 5px; }
.apps .active { background: #6b6b6b; width: 61px; margin: 0; background-clip: border-box; border-top-color: #6b6b6b; border-right: 4px solid #595959; }
.tray { display: flex; align-items: center; }
.weather { font-size: 17px; gap: 12px; margin-right: 20px; }
.tray-icons { display: flex; align-items: center; gap: 10px; }
.clock { width: 96px; text-align: center; line-height: 23px; }
.clock span { display: block; }
.notify { position: relative; width: 40px; height: 50px; }
.badge { position: absolute; left: 19px; top: 24px; width: 21px; height: 21px; border: 1px solid #aaa; border-radius: 50%; background: #3c3c3c; line-height: 19px; }
.peek { align-self: stretch; width: 7px; margin-left: 14px; border-left: 1px solid #999; }

.dialog { position: absolute; left: 72px; top: 65px; width: 390px; background: #353535; color: #eeeeec; border: 1px solid #777; border-top: 0; box-shadow: 3px 6px 14px rgba(0, 0, 0, .35); }
.dialog-head { display: flex; align-items: center; gap: 5px; height: 37px; padding: 0 14px 0 9px; background: #fff; color: #000; }
.dialog-head h2 { flex: 1; }
.dialog-body { display: flex; flex-direction: column; gap: 4px; padding: 12px 16px 0 12px; }
.row { display: flex; justify-content: space-between; line-height: 22px; }
.options { display: flex; flex-direction: column; }
.options label, .again { display: flex; align-items: center; gap: 4px; height: 24px; }
.dialog input { appearance: none; width: 16px; height: 16px; border: 1px solid #111; background: #3b3b3b; border-radius: 50%; }
.dialog input:checked { border-color: #1a6fd8; background: radial-gradient(circle, #fff 3px, #1a6fd8 5px); }
.dialog .again input { border-radius: 3px; }
.again { padding-left: 4px; }
.dialog-actions { display: flex; justify-content: flex-end; gap: 4px; padding: 10px 2px 2px; }
.dialog-actions button { width: 86px; height: 34px; border: 1px solid #202020; border-radius: 5px; }
```
FILE: app.js
```
const NS = "http://www.w3.org/2000/svg";
const MAJOR = 170.8;

function add(svg, tag, attrs, text) {
  const el = document.createElementNS(NS, tag);
  for (const k in attrs) el.setAttribute(k, attrs[k]);
  if (text) el.textContent = text;
  svg.appendChild(el);
}

function drawRuler(svg, origin, vertical) {
  svg.replaceChildren();
  const box = svg.getBoundingClientRect();
  const length = vertical ? box.height : box.width;
  const edge = vertical ? 17.5 : 25.5;
  const sizes = vertical ? [18, 10, 6] : [26, 14, 8];
  for (let i = -60; i < 90; i++) {
    const p = Math.round(origin + i * MAJOR / 10) + 0.5;
    if (p < 0 || p > length) continue;
    const size = i % 10 === 0 ? sizes[0] : i % 5 === 0 ? sizes[1] : sizes[2];
    const a = edge - size;
    add(svg, "line", vertical ? { x1: a, x2: edge, y1: p, y2: p } : { x1: p, x2: p, y1: a, y2: edge });
    if (i % 10 === 0) {
      const label = String(i * 25);
      if (vertical) {
        [...label].forEach((c, n) => add(svg, "text", { x: 8, y: Math.round(p + 10 + n * 10) }, c));
      } else {
        add(svg, "text", { x: p + 2, y: 12 }, label);
      }
    }
  }
  add(svg, "line", vertical ? { x1: edge, x2: edge, y1: 0, y2: length } : { x1: 0, x2: length, y1: edge, y2: edge });
  if (vertical) add(svg, "path", { d: "M13 0l5 4-5 4z", fill: "#90908d" });
}

function drawRulers() {
  drawRuler(document.getElementById("rulerH"), 809, false);
  drawRuler(document.getElementById("rulerV"), 243, true);
}
drawRulers();
addEventListener("resize", drawRulers);

const colors = ("none 000000 1a1a1a 333333 4d4d4d 666666 808080 999999 b3b3b3 cccccc e6e6e6 ececec f2f2f2 f9f9f9 ffffff " +
  "800000 ff0000 808000 ffff00 008000 00ff00 008080 00ffff 000080 0000ff 800080 ff00ff " +
  "2b0000 550000 800000 aa0000 d40000 ff0000 ff2a2a ff5555 ff8080 ffaaaa ffd5d5 " +
  "280b0b 501616 782121 a02c2c c83737 d35f5f de8787 e9afaf f4d7d7 " +
  "241c1c 483737 6c5353 916f6f ac9393 c8b7b7 e3dbdb " +
  "2b1100 552200 803300 aa4400 d45500 ff6600 ff7f2a ff9955 ffb380 ffccaa ffe6d5 " +
  "28170b 502d16 784421 a05a2c c87137 d38d5f deaa87 e9c6af f4e3d7 " +
  "241f1c 483e37 6c5d53 917c6f ac9d93 c8beb7 e3dedb " +
  "2b2200 554400 806600 aa8800 d4aa00 ffcc00 ffd42a ffdd55 ffe680 ffeeaa fff6d5 " +
  "28220b 504416 786721 a0892c c8ab37 d3bc5f decd87").split(" ");
const swatches = document.getElementById("swatches");
for (const c of colors) {
  const b = document.createElement("button");
  b.setAttribute("aria-label", c);
  if (c === "none") {
    b.style.background = "#fff";
    b.innerHTML = '<svg width="19" height="19"><path d="M0 0l19 19M19 0L0 19" stroke="#7a0c0c" stroke-width="1.5"/></svg>';
  } else {
    b.style.background = "#" + c;
  }
  swatches.appendChild(b);
}
```
